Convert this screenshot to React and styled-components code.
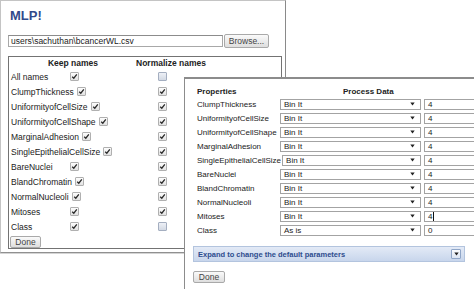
import React from 'react';
import styled, { createGlobalStyle } from 'styled-components';

const GlobalStyle = createGlobalStyle`
  html, body {
    margin: 0;
    padding: 0;
    background: #fff;
  }
  body {
    font-family: "Liberation Sans", Arial, sans-serif;
    color: #222;
  }
  * {
    box-sizing: border-box;
  }
`;

const Desktop = styled.div`
  position: relative;
  width: 474px;
  height: 289px;
  overflow: hidden;
  background: #fff;
`;

const LeftWindow = styled.div`
  position: absolute;
  left: 0;
  top: 0;
  width: 286px;
  height: 253px;
  border: 1px solid #c4c4c4;
  border-right-color: #8a8a8a;
  border-bottom-color: #909090;
  box-shadow: 0 1px 0 #d4d4d4;
  background: #fff;
  padding: 7px 4px 0 7px;
  font-size: 8.5px;
`;

const Title = styled.h1`
  margin: 0;
  font-size: 13px;
  line-height: 15px;
  font-weight: 700;
  color: #31498a;
  padding-left: 2px;
`;

const FileRow = styled.div`
  display: flex;
  align-items: center;
  height: 14px;
  margin-top: 11px;
`;

const FileField = styled.div`
  width: 215px;
  height: 12px;
  border: 1px solid #a8a8a8;
  border-top-color: #8c8c8c;
  padding-left: 2px;
  line-height: 10px;
  font-size: 8.5px;
  color: #222;
  white-space: nowrap;
`;

const Button = styled.div`
  display: flex;
  align-items: center;
  justify-content: center;
  width: ${p => p.$width}px;
  height: ${p => p.$height}px;
  margin-left: ${p => p.$left || 0}px;
  border: 1px solid #a9a9a9;
  border-radius: 2px;
  background: linear-gradient(#fafafa, #dedede);
  color: #444;
  font-size: 8.5px;
`;

const NamesBox = styled.div`
  margin-top: 8px;
  width: 274px;
  height: 193px;
  border: 1px solid #737373;
  padding: 0 0 0 1px;
`;

const NamesGrid = styled.div`
  display: grid;
  grid-template-columns: 126px 70px 1fr;
  grid-auto-rows: 15px;
  grid-template-rows: 12px;
`;

const HeadCell = styled.div`
  font-weight: 700;
  text-align: center;
  line-height: 12px;
  white-space: nowrap;
`;

const NameCell = styled.div`
  display: flex;
  align-items: center;
  padding-left: ${p => p.$pad || 0}px;
`;

const NameLabel = styled.span`
  display: inline-block;
  min-width: 56px;
  white-space: nowrap;
`;

const Check = styled.span`
  display: inline-flex;
  align-items: center;
  justify-content: center;
  width: 9px;
  height: 9px;
  margin-left: ${p => p.$left || 0}px;
  border: 1px solid ${p => (p.$on ? '#b0b0b0' : '#a4aec0')};
  border-radius: 1px;
  background: ${p =>
    p.$on ? 'linear-gradient(#fdfdfd, #e2e2e2)' : 'linear-gradient(#eef1f6, #d3d9e4)'};
`;

const DoneRow = styled.div`
  margin-top: 2px;
`;

const RightWindow = styled.div`
  position: absolute;
  left: 184px;
  top: 77px;
  width: 300px;
  height: 230px;
  border: 1px solid #8c8c8c;
  border-top-width: 2px;
  background: #fff;
  padding: 6px 0 0 8px;
  font-size: 8px;
`;

const PropRow = styled.div`
  display: flex;
  align-items: center;
  width: 301px;
  height: ${p => (p.$head ? 12 : 14)}px;
`;

const PropLabel = styled.div`
  flex: 0 0 auto;
  min-width: 87px;
  padding-left: 4px;
  padding-right: 1px;
  white-space: nowrap;
  font-weight: ${p => (p.$bold ? 700 : 400)};
`;

const ProcessHead = styled.div`
  padding-left: 63px;
  font-weight: 700;
  white-space: nowrap;
`;

const SelectBox = styled.div`
  display: flex;
  align-items: center;
  justify-content: space-between;
  flex: 0 1 141px;
  min-width: 0;
  height: 11px;
  border: 1px solid #a3a3a3;
  padding: 0 5px 0 3px;
  background: #fff;
`;

const ValueBox = styled.div`
  display: flex;
  align-items: center;
  flex: 0 0 70px;
  height: 11px;
  margin-left: 3px;
  border: 1px solid #a3a3a3;
  padding-left: 3px;
  background: #fff;
`;

const Caret = styled.span`
  display: inline-block;
  width: 1px;
  height: 9px;
  margin-left: 0.5px;
  background: #111;
`;

const ExpandBar = styled.div`
  display: flex;
  align-items: center;
  justify-content: space-between;
  width: 272px;
  height: 16px;
  margin-top: 9px;
  padding: 0 3px 0 4px;
  border: 1px solid #b3c4de;
  background: linear-gradient(#e3eaf6, #c8d6ec);
  color: #2d4c8e;
  font-size: 7.5px;
  font-weight: 700;
`;

const ExpandToggle = styled.span`
  display: inline-flex;
  align-items: center;
  justify-content: center;
  width: 10px;
  height: 10px;
  border: 1px solid #90a6c8;
  border-radius: 1px;
  background: linear-gradient(#fbfcfe, #dbe4f2);
`;

const DoneWrap = styled.div`
  margin-top: 9px;
`;

const Tick = () => (
  <svg width="7" height="7" viewBox="0 0 7 7">
    <path d="M1.2 3.7 L2.8 5.2 L5.8 1.4" fill="none" stroke="#2a2a2a" strokeWidth="1.3" />
  </svg>
);

const Arrow = () => (
  <svg width="5" height="4" viewBox="0 0 5 4">
    <path d="M0.3 0.5 H4.7 L2.5 3.6 Z" fill="#222" />
  </svg>
);

const names = [
  ['All names', true, false],
  ['ClumpThickness', true, true],
  ['UniformityofCellSize', true, true],
  ['UniformityofCellShape', true, true],
  ['MarginalAdhesion', true, true],
  ['SingleEpithelialCellSize', true, true],
  ['BareNuclei', true, true],
  ['BlandChromatin', true, true],
  ['NormalNucleoli', true, true],
  ['Mitoses', true, true],
  ['Class', true, false]
];

const props = [
  ['ClumpThickness', 'Bin It', '4'],
  ['UniformityofCellSize', 'Bin It', '4'],
  ['UniformityofCellShape', 'Bin It', '4'],
  ['MarginalAdhesion', 'Bin It', '4'],
  ['SingleEpithelialCellSize', 'Bin It', '4'],
  ['BareNuclei', 'Bin It', '4'],
  ['BlandChromatin', 'Bin It', '4'],
  ['NormalNucleoli', 'Bin It', '4'],
  ['Mitoses', 'Bin It', '4', true],
  ['Class', 'As is', '0']
];

const App = () => (
  <Desktop>
    <GlobalStyle />
    <LeftWindow>
      <Title>MLP!</Title>
      <FileRow>
        <FileField>users\sachuthan\bcancerWL.csv</FileField>
        <Button $width={45} $height={14} $left={1}>Browse...</Button>
      </FileRow>
      <NamesBox>
        <NamesGrid>
          <HeadCell>Keep names</HeadCell>
          <HeadCell>Normalize names</HeadCell>
          <div />
          {names.map(([name, keep, norm]) => (
            <React.Fragment key={name}>
              <NameCell $pad={1}>
                <NameLabel>{name}</NameLabel>
                <Check $on={keep} $left={3}>{keep && <Tick />}</Check>
              </NameCell>
              <NameCell $pad={22}>
                <Check $on={norm}>{norm && <Tick />}</Check>
              </NameCell>
              <div />
            </React.Fragment>
          ))}
        </NamesGrid>
        <DoneRow>
          <Button $width={31} $height={12}>Done</Button>
        </DoneRow>
      </NamesBox>
    </LeftWindow>

    <RightWindow>
      <PropRow $head>
        <PropLabel $bold>Properties</PropLabel>
        <ProcessHead>Process Data</ProcessHead>
      </PropRow>
      {props.map(([name, mode, value, focused]) => (
        <PropRow key={name}>
          <PropLabel>{name}</PropLabel>
          <SelectBox>
            <span>{mode}</span>
            <Arrow />
          </SelectBox>
          <ValueBox>
            {value}
            {focused && <Caret />}
          </ValueBox>
        </PropRow>
      ))}
      <ExpandBar>
        <span>Expand to change the default parameters</span>
        <ExpandToggle>
          <Arrow />
        </ExpandToggle>
      </ExpandBar>
      <DoneWrap>
        <Button $width={32} $height={12}>Done</Button>
      </DoneWrap>
    </RightWindow>
  </Desktop>
);

export default App;
